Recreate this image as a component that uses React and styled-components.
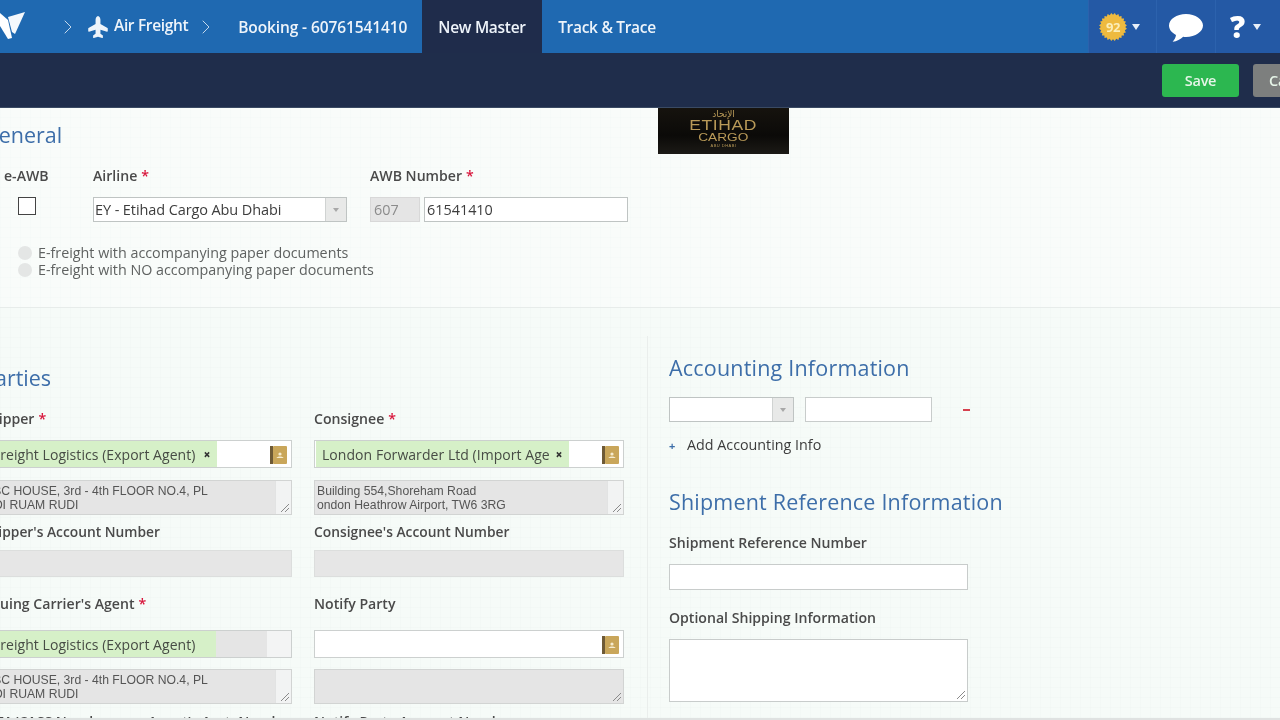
import React from "react";
import styled, { createGlobalStyle } from "styled-components";
import { FaPlane } from "react-icons/fa";
import { FiChevronRight } from "react-icons/fi";

// #region - styling -

const Global = createGlobalStyle`
  html, body {
    margin: 0;
    padding: 0;
    width: 1280px;
    height: 720px;
    overflow: hidden;
    background: #f6faf8;
  }
  * { box-sizing: border-box; }
`;

const Page = styled.div`
  width: 1280px;
  height: 720px;
  overflow: hidden;
  font-family: "Open Sans", "Liberation Sans", sans-serif;
  filter: blur(0.45px);
  display: flex;
  flex-direction: column;
`;

const TopBar = styled.header`
  height: 53px;
  flex: none;
  background: #1f69b1;
  display: flex;
  align-items: stretch;
  color: #eef4fa;
`;

const Crumbs = styled.nav`
  display: flex;
  align-items: center;
  width: 422px;
  flex: none;
`;

const Logo = styled.svg`
  width: 25px;
  height: 28px;
  margin: -2px 31px 0 0;
  flex: none;
`;

const Chevron = styled(FiChevronRight)`
  font-size: 24px;
  stroke-width: 1;
  opacity: 0.8;
  flex: none;
  margin-left: ${(p) => p.$left || "0"};
`;

const Plane = styled(FaPlane)`
  font-size: 22px;
  transform: rotate(-90deg);
  margin: 0 5px 0 7px;
  flex: none;
`;

const CrumbText = styled.span`
  font-size: 15.5px;
  font-weight: 600;
  white-space: nowrap;
  letter-spacing: ${(p) => p.$spacing || "-0.3px"};
  margin: ${(p) => p.$margin || "0"};
`;

const Tab = styled.div`
  display: flex;
  align-items: center;
  font-size: 15.5px;
  font-weight: 600;
  letter-spacing: -0.3px;
  white-space: nowrap;
  justify-content: center;
  width: ${(p) => p.$width};
  background: ${(p) => (p.$active ? "#1f2c4b" : "transparent")};
`;

const Tools = styled.div`
  margin-left: auto;
  display: flex;
  background: #2459a5;
`;

const ToolCell = styled.div`
  position: relative;
  width: ${(p) => p.$width};
  display: flex;
  align-items: center;
  justify-content: center;
  gap: ${(p) => p.$gap || "5px"};
  padding-right: ${(p) => p.$padRight || "0"};
  border-left: 1px solid #2c62ad;
`;

const Badge = styled.div`
  position: relative;
  width: 28px;
  height: 28px;
  margin-left: -6px;
  display: flex;
  align-items: center;
  justify-content: center;
`;

const BadgeBurst = styled.svg`
  position: absolute;
  inset: 0;
`;

const BadgeText = styled.span`
  position: relative;
  font-size: 13px;
  font-weight: 700;
  color: #fbeeb9;
  letter-spacing: -0.5px;
`;

const Caret = styled.span`
  width: 0;
  height: 0;
  border-left: 4.5px solid transparent;
  border-right: 4.5px solid transparent;
  border-top: 6px solid #e8eff8;
`;

const Bubble = styled.svg`
  margin-top: 3px;
`;

const Help = styled.span`
  font-size: 30px;
  font-weight: 800;
  color: #fff;
  line-height: 1;
`;

const ActionBar = styled.div`
  height: 55px;
  flex: none;
  background: #1f2d4b;
  border-bottom: 1px solid #3a4a63;
  display: flex;
  justify-content: flex-end;
  align-items: flex-start;
  gap: 14px;
  padding-top: 11px;
`;

const Button = styled.div`
  width: 77px;
  height: 33px;
  flex: none;
  border-radius: 3px;
  background: ${(p) => p.$bg};
  color: #e6f5e8;
  font-size: 14.5px;
  font-weight: 600;
  letter-spacing: -0.3px;
  display: flex;
  align-items: center;
  padding-left: ${(p) => p.$pad || "0"};
  justify-content: ${(p) => (p.$pad ? "flex-start" : "center")};
  margin-right: ${(p) => p.$pull || "0"};
`;

const Content = styled.main`
  flex: 1;
  min-height: 0;
  display: flex;
  flex-direction: column;
  border-bottom: 2px solid #dfe2e1;
  background-color: #f6fbf8;
  background-image: repeating-linear-gradient(0deg, rgba(90, 120, 110, 0.018) 0 1px, transparent 1px 10px),
    repeating-linear-gradient(90deg, rgba(90, 120, 110, 0.018) 0 1px, transparent 1px 10px);
`;

const General = styled.section`
  height: 200px;
  flex: none;
  display: flex;
  border-bottom: 1px solid #e7ecea;
  background: rgba(255, 255, 255, 0.3);
`;

const GeneralForm = styled.div`
  flex: 0 0 658px;
  padding-top: 12px;
`;

const Heading = styled.h2`
  margin: ${(p) => p.$margin || "0"};
  font-size: 21.5px;
  font-weight: 400;
  line-height: 30px;
  letter-spacing: ${(p) => p.$spacing || "0"};
  color: #3d6ea9;
  white-space: nowrap;
`;

const AirlineRow = styled.div`
  display: flex;
  margin: 16px 0 0 4px;
`;

const EawbCol = styled.div`
  width: 89px;
  flex: none;
`;

const Label = styled.div`
  font-size: ${(p) => p.$size || "14.1px"};
  font-weight: 600;
  line-height: 20px;
  height: 20px;
  color: #4a4a4a;
  white-space: nowrap;
  margin-top: ${(p) => p.$top || "0"};
`;

const Req = styled.span`
  color: #d8143a;
  margin-left: 4px;
`;

const Checkbox = styled.div`
  width: 18px;
  height: 18px;
  margin: 11px 0 0 14px;
  background: #fff;
  border: 1.5px solid #444;
`;

const AirlineCol = styled.div`
  width: 277px;
  flex: none;
`;

const Combo = styled.div`
  width: ${(p) => p.$width};
  height: 25px;
  margin-top: ${(p) => p.$top || "0"};
  background: #fff;
  border: 1px solid #bfc4c3;
  display: flex;
  align-items: center;
  justify-content: space-between;
  flex: none;
`;

const ComboText = styled.span`
  padding-left: 1px;
  font-size: 14.5px;
  color: #3d3d3d;
  white-space: nowrap;
  letter-spacing: -0.1px;
`;

const ComboArrow = styled.span`
  width: 21px;
  height: 100%;
  background: #e8e9e8;
  border-left: 1px solid #d0d3d2;
  display: flex;
  align-items: center;
  justify-content: center;
  &::after {
    content: "";
    border-left: 3.5px solid transparent;
    border-right: 3.5px solid transparent;
    border-top: 4px solid #a8a8a8;
  }
`;

const AwbInputs = styled.div`
  display: flex;
  gap: 4px;
  margin-top: 11px;
`;

const AwbPrefix = styled.div`
  width: 50px;
  height: 25px;
  background: #e5e5e5;
  border: 1px solid #d8d8d8;
  color: #8b8b8b;
  font-size: 14.4px;
  line-height: 23px;
  padding-left: 3px;
`;

const AwbNumber = styled.div`
  width: 204px;
  height: 25px;
  background: #fff;
  border: 1px solid #bfc4c3;
  color: #3d3d3d;
  font-size: 14.4px;
  line-height: 23px;
  padding-left: 2px;
`;

const RadioGroup = styled.div`
  margin: 22px 0 0 18px;
`;

const RadioRow = styled.div`
  height: 17px;
  display: flex;
  align-items: center;
  gap: 6px;
  font-size: 14.3px;
  color: #5f6261;
  white-space: nowrap;
`;

const RadioDot = styled.span`
  width: 14px;
  height: 14px;
  border-radius: 50%;
  background: #e4e6e5;
  flex: none;
`;

const CargoLogo = styled.div`
  width: 131px;
  height: 46px;
  flex: none;
  background: linear-gradient(180deg, #16130e, #0b0a08 60%, #1c1a16);
  color: #b99a58;
  display: flex;
  flex-direction: column;
  align-items: center;
  font-family: "Liberation Sans", sans-serif;
  overflow: hidden;
`;

const LogoArabic = styled.span`
  font-family: "DejaVu Sans", sans-serif;
  font-size: 9px;
  line-height: 10px;
  margin-top: 1px;
`;

const LogoMain = styled.span`
  font-size: ${(p) => p.$size};
  line-height: ${(p) => p.$line};
  letter-spacing: ${(p) => p.$spacing || "0"};
  transform: scaleX(${(p) => p.$stretch || 1});
`;

const Lower = styled.section`
  flex: 1;
  min-height: 0;
  margin-left: -18px;
  display: grid;
  grid-template-columns: 310px 310px 1fr;
  column-gap: 22px;
  overflow: hidden;
`;

const PartyCol = styled.div`
  padding-top: ${(p) => p.$top || "101px"};
  min-width: 0;
`;

const HeadingSlot = styled.div`
  height: 30px;
  margin: 55px 0 16px;
`;

const PartyInput = styled.div`
  position: relative;
  height: ${(p) => p.$height || "28px"};
  margin-top: ${(p) => p.$top || "11px"};
  background: ${(p) => (p.$disabled ? "#f3f4f4" : "#fff")};
  border: 1px solid #ccd0cf;
  display: flex;
  align-items: center;
  padding: 0 3px;
`;

const Chip = styled.div`
  width: ${(p) => p.$width || "253px"};
  height: 26px;
  background: #d6f0c8;
  display: flex;
  align-items: center;
  padding-left: ${(p) => p.$pad || "6px"};
  flex: none;
  margin: -1px 0 -1px -2px;
`;

const ChipText = styled.span`
  flex: 1;
  min-width: 0;
  overflow: hidden;
  white-space: nowrap;
  font-size: 14px;
  color: #474c45;
  letter-spacing: 0.05px;
`;

const ChipClose = styled.span`
  width: 20px;
  flex: none;
  text-align: center;
  font-size: 12px;
  font-weight: 800;
  color: #333;
`;

const BookIcon = styled.svg`
  position: absolute;
  right: 4px;
  top: 5px;
  width: 17px;
  height: 18px;
`;

const Address = styled.div`
  position: relative;
  height: ${(p) => p.$height || "35px"};
  margin-top: ${(p) => p.$top || "12px"};
  background: #e5e5e5;
  border: 1px solid #d2d4d3;
  padding: 4px 2px;
  font-family: "Liberation Sans", Arial, sans-serif;
  font-size: 12.2px;
  line-height: 13.5px;
  color: #555;
  white-space: pre;
  overflow: hidden;
`;

const ScrollTrack = styled.div`
  position: absolute;
  top: 0;
  right: 0;
  bottom: 0;
  width: 16px;
  background: #f2f3f3;
  border-left: 1px solid #e2e3e3;
`;

const Grip = styled.svg`
  position: absolute;
  right: 1px;
  bottom: 1px;
  width: 11px;
  height: 11px;
`;

const LockedTail = styled.span`
  position: absolute;
  top: 0;
  bottom: 0;
  left: 233px;
  width: 51px;
  background: #e5e5e5;
`;

const AccountInput = styled.div`
  height: 27px;
  margin-top: 8px;
  background: #e6e6e6;
  border: 1px solid #dcdedd;
`;

const RightCol = styled.div`
  margin-left: 1px;
  margin-top: 28px;
  padding: 17px 0 0 21px;
  border-left: 1px solid #eaeeec;
`;

const AccountingRow = styled.div`
  display: flex;
  align-items: center;
  margin-top: 14px;
`;

const PlainInput = styled.div`
  width: ${(p) => p.$width};
  height: ${(p) => p.$height || "26px"};
  margin: ${(p) => p.$margin || "0"};
  background: #fff;
  border: 1px solid #c8cccb;
  flex: none;
  position: relative;
`;

const Minus = styled.span`
  width: 7px;
  height: 2px;
  background: #d6414f;
  margin-left: 31px;
`;

const AddRow = styled.div`
  display: flex;
  align-items: center;
  height: 20px;
  margin-top: 12px;
  font-size: 14.3px;
  color: #3c3c3c;
  white-space: nowrap;
`;

const Plus = styled.span`
  width: 18px;
  color: #3d6ea9;
  font-size: 11px;
  font-weight: 700;
  margin-top: 2px;
`;

const RowLabel = styled.div`
  display: grid;
  grid-template-columns: 166px 1fr;
`;

// #endregion

const Book = () => (
  <BookIcon viewBox="0 0 17 18">
    <rect x="0" y="0" width="3" height="18" fill="#6e5a36" />
    <rect x="3" y="0" width="14" height="18" rx="1" fill="#c9a65a" />
    <circle cx="10" cy="8" r="1.6" fill="#f6ecd0" />
    <path d="M6.5 12c.6-2 6.4-2 7 0z" fill="#f6ecd0" />
  </BookIcon>
);

const ResizeGrip = () => (
  <Grip viewBox="0 0 11 11">
    <path d="M2 10 10 2M6 10l4-4" stroke="#8a8a8a" strokeWidth="1" fill="none" />
  </Grip>
);

const burst = () => {
  let pts = [];
  for (let i = 0; i < 48; i++) {
    const r = i % 2 ? 14 : 12.2;
    const a = (i / 48) * Math.PI * 2;
    pts.push(`${(14 + r * Math.cos(a)).toFixed(1)},${(14 + r * Math.sin(a)).toFixed(1)}`);
  }
  return pts.join(" ");
};

export default function App() {
  return (
    <Page>
      <Global />
      <TopBar>
        <Crumbs>
          <Logo viewBox="0 0 25 28">
            <path d="M0 1 8 8 12 26 8 27 0 14z" fill="#fff" />
            <path d="M8 5 25 0 15 22 12 20z" fill="#f4f8fc" />
          </Logo>
          <Chevron />
          <Plane />
          <CrumbText $margin="0 0 4px 0" $spacing="-0.35px">Air Freight</CrumbText>
          <Chevron $left="6px" />
          <CrumbText $margin="0 0 0 20px" $spacing="-0.11px">Booking - 60761541410</CrumbText>
        </Crumbs>
        <Tab $active $width="120px">New Master</Tab>
        <Tab $width="130px">Track &amp; Trace</Tab>
        <Tools>
          <ToolCell $width="68px">
            <Badge>
              <BadgeBurst viewBox="0 0 28 28">
                <polygon points={burst()} fill="#eeba3f" />
              </BadgeBurst>
              <BadgeText>92</BadgeText>
            </Badge>
            <Caret />
          </ToolCell>
          <ToolCell $width="59px">
            <Bubble width="36" height="30" viewBox="0 0 36 30">
              <path
                d="M18 1C8.6 1 1 6.2 1 12.6c0 3.9 2.8 7.3 7 9.4-.4 2.6-1.6 5-3.4 6.8 4.2-.4 8-2.400 10.600-5 .9.1 1.800.2 2.800.2 9.400 0 17-5.200 17-11.400S27.400 1 18 1z"
                fill="#fff"
              />
            </Bubble>
          </ToolCell>
          <ToolCell $width="65px" $gap="8px" $padRight="5px">
            <Help>?</Help>
            <Caret />
          </ToolCell>
        </Tools>
      </TopBar>

      <ActionBar>
        <Button $bg="#2cb750">Save</Button>
        <Button $bg="#7d7f7e" $pad="16px" $pull="-50px">Cancel</Button>
      </ActionBar>

      <Content>
        <General>
          <GeneralForm>
            <Heading $margin="0 0 0 -17px">General</Heading>
            <AirlineRow>
              <EawbCol>
                <Label>e-AWB</Label>
                <Checkbox />
              </EawbCol>
              <AirlineCol>
                <Label>Airline<Req>*</Req></Label>
                <Combo $width="254px" $top="11px">
                  <ComboText>EY - Etihad Cargo Abu Dhabi</ComboText>
                  <ComboArrow />
                </Combo>
              </AirlineCol>
              <div>
                <Label>AWB Number<Req>*</Req></Label>
                <AwbInputs>
                  <AwbPrefix>607</AwbPrefix>
                  <AwbNumber>61541410</AwbNumber>
                </AwbInputs>
              </div>
            </AirlineRow>
            <RadioGroup>
              <RadioRow><RadioDot />E-freight with accompanying paper documents</RadioRow>
              <RadioRow><RadioDot />E-freight with NO accompanying paper documents</RadioRow>
            </RadioGroup>
          </GeneralForm>
          <CargoLogo>
            <LogoArabic>الإتحاد</LogoArabic>
            <LogoMain $size="14px" $line="13px" $spacing="0.5px" $stretch="1.25">ETIHAD</LogoMain>
            <LogoMain $size="10.5px" $line="11px" $stretch="1.3">CARGO</LogoMain>
            <LogoMain $size="4px" $line="6px" $spacing="0.5px">ABU DHABI</LogoMain>
          </CargoLogo>
        </General>

        <Lower>
          <PartyCol $top="0">
            <HeadingSlot>
              <Heading>Parties</Heading>
            </HeadingSlot>
            <Label>Shipper<Req>*</Req></Label>
            <PartyInput>
              <Chip $width="233px" $pad="9px">
                <ChipText>Freight Logistics (Export Agent)</ChipText>
                <ChipClose>×</ChipClose>
              </Chip>
              <Book />
            </PartyInput>
            <Address>
              {"ABC HOUSE, 3rd - 4th FLOOR NO.4, PL\nSOI RUAM RUDI"}
              <ScrollTrack />
              <ResizeGrip />
            </Address>
            <Label $top="7px" $size="13.8px">Shipper's Account Number</Label>
            <AccountInput />
            <Label $top="17px">Issuing Carrier's Agent<Req>*</Req></Label>
            <PartyInput $top="16px" $disabled>
              <LockedTail />
              <Chip $width="233px" $pad="9px">
                <ChipText>Freight Logistics (Export Agent)</ChipText>
              </Chip>
            </PartyInput>
            <Address $top="11px">
              {"ABC HOUSE, 3rd - 4th FLOOR NO.4, PL\nSOI RUAM RUDI"}
              <ScrollTrack />
              <ResizeGrip />
            </Address>
            <RowLabel>
              <Label $top="8px">IATA/CASS Number</Label>
              <Label $top="8px">Agent's Acct. Number</Label>
            </RowLabel>
          </PartyCol>

          <PartyCol>
            <Label>Consignee<Req>*</Req></Label>
            <PartyInput>
              <Chip>
                <ChipText>London Forwarder Ltd (Import Agent)</ChipText>
                <ChipClose>×</ChipClose>
              </Chip>
              <Book />
            </PartyInput>
            <Address>
              {"Building 554,Shoreham Road\nondon Heathrow Airport, TW6 3RG"}
              <ScrollTrack />
              <ResizeGrip />
            </Address>
            <Label $top="7px" $size="13.8px">Consignee's Account Number</Label>
            <AccountInput />
            <Label $top="17px">Notify Party</Label>
            <PartyInput $top="16px">
              <Book />
            </PartyInput>
            <Address $top="11px">
              <ResizeGrip />
            </Address>
            <Label $top="8px">Notify Party Account Number</Label>
          </PartyCol>

          <RightCol>
            <Heading $spacing="0.2px">Accounting Information</Heading>
            <AccountingRow>
              <Combo $width="125px">
                <span />
                <ComboArrow />
              </Combo>
              <PlainInput $width="127px" $margin="0 0 0 11px" $height="25px" />
              <Minus />
            </AccountingRow>
            <AddRow>
              <Plus>+</Plus>
              Add Accounting Info
            </AddRow>
            <Heading $margin="33px 0 0" $spacing="0.2px">Shipment Reference Information</Heading>
            <Label $top="16px">Shipment Reference Number</Label>
            <PlainInput $width="299px" $margin="11px 0 0" />
            <Label $top="18px">Optional Shipping Information</Label>
            <PlainInput $width="299px" $height="63px" $margin="11px 0 0">
              <ResizeGrip />
            </PlainInput>
          </RightCol>
        </Lower>
      </Content>
    </Page>
  );
}
